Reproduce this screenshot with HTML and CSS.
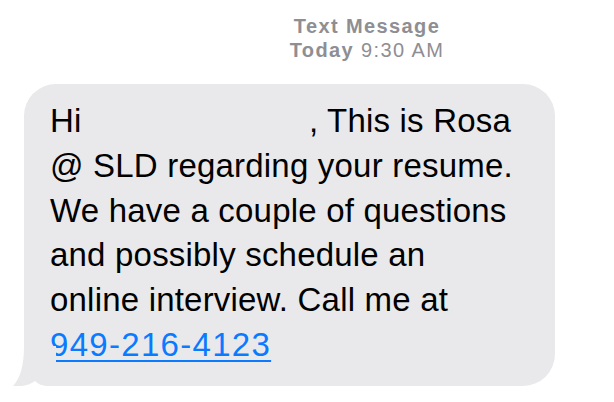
FILE: index.html
```html
<!DOCTYPE html>
<html>
<head>
<meta charset="utf-8">
<link rel="stylesheet" href="styles.css">
</head>
<body>
<div class="thread">
  <div class="meta">
    <div class="meta-line"><b>Text Message</b></div>
    <div class="meta-line"><b>Today</b> 9:30 AM</div>
  </div>
  <div class="bubble">
    <p class="msg">Hi <span class="redacted"></span>, This is Rosa<br>@ SLD regarding your resume.<br>We have a couple of questions<br>and possibly schedule an<br>online interview. Call me at<br><a class="phone" href="#">949-216-4123</a></p>
    <svg class="tail" width="44" height="40" viewBox="0 0 44 40" aria-hidden="true">
      <path d="M12,0 C12,20 8,33 1,40 C10,41 18,39 23,35 C26,38 30,40 38,40 L44,40 L44,0 Z" fill="#e9e9eb"/>
    </svg>
  </div>
</div>
</body>
</html>
```
FILE: styles.css
```css
html, body {
  margin: 0;
  padding: 0;
  background: #ffffff;
}
.thread {
  width: 614px;
  height: 402px;
  overflow: hidden;
  font-family: "Liberation Sans", Arial, sans-serif;
}
.meta {
  margin-left: 120px;
  padding-top: 14px;
  text-align: center;
  color: #8e8e93;
  font-size: 20px;
  line-height: 24px;
  letter-spacing: 1.4px;
}
.meta b {
  font-weight: bold;
}
.bubble {
  position: relative;
  margin: 22px 0 0 24px;
  width: 531px;
  box-sizing: border-box;
  padding: 15px 20px 18px 26px;
  background: #e9e9eb;
  border-radius: 32px;
}
.msg {
  margin: 0;
  font-size: 33px;
  line-height: 44.8px;
  letter-spacing: 0.2px;
  color: #000;
}
.redacted {
  display: inline-block;
  width: 218px;
}
.phone {
  color: #0a7aff;
  letter-spacing: 1.3px;
  text-decoration: underline;
  text-decoration-thickness: 2px;
  text-underline-offset: 4px;
}
.tail {
  position: absolute;
  left: -12px;
  bottom: 0;
  display: block;
}
```
